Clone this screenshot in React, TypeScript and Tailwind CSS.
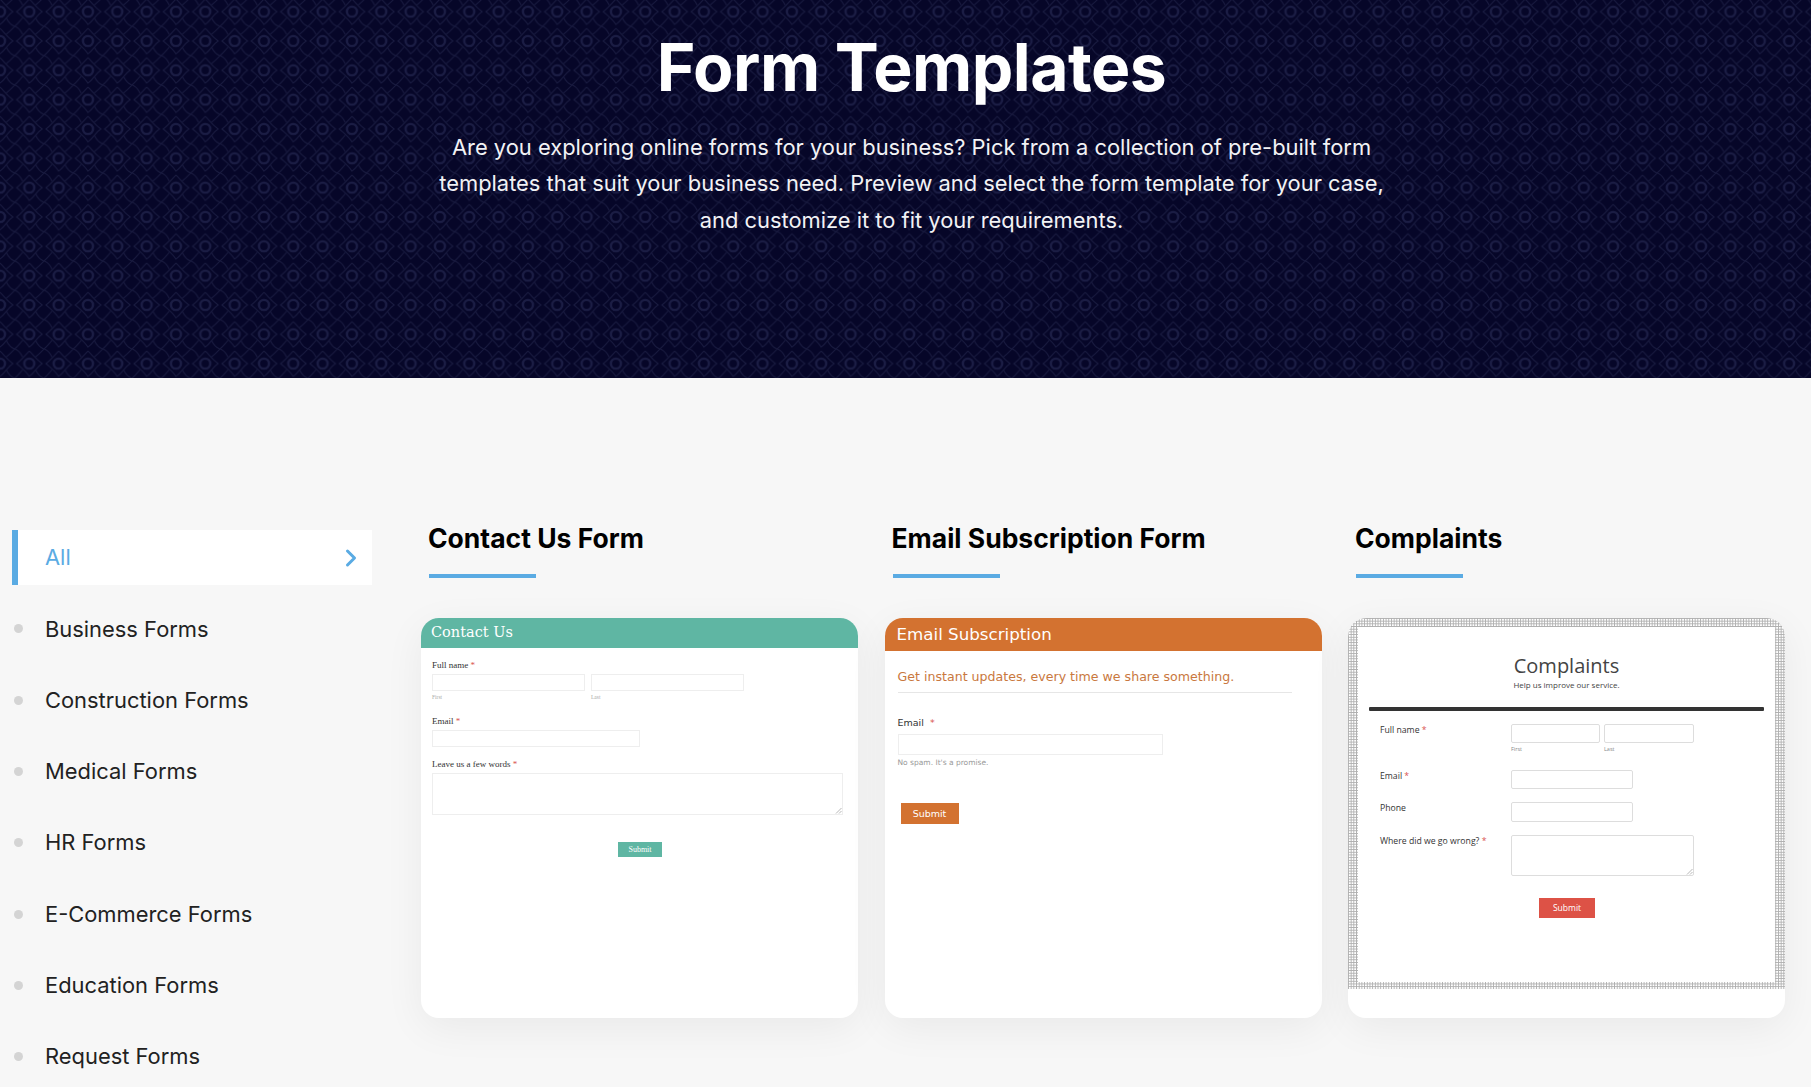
import React from "react";
import { ChevronRight } from "lucide-react";

const cats = ["Business Forms","Construction Forms","Medical Forms","HR Forms","E-Commerce Forms","Education Forms","Request Forms"];
const Star = () => <span className="text-[#d9534f]"> *</span>;

function Grip() {
  return (
    <svg className="absolute right-0 bottom-0" width="7" height="7" viewBox="0 0 7 7" aria-hidden="true">
      <path d="M1 6.5 L6.5 1 M4 6.5 L6.5 4" stroke="#999" strokeWidth="0.7" fill="none" />
    </svg>
  );
}

function Pattern() {
  return (
    <svg className="absolute inset-0 w-full h-full" aria-hidden="true">
      <defs>
        <pattern id="tile" x="14.66" y="-3" width="29.33" height="29.33" patternUnits="userSpaceOnUse">
          <circle cx="14.66" cy="14.66" r="5" fill="none" stroke="#1b1d44" strokeWidth="2.4" />
          <path d="M14.66 2 C19 6 20 9 27.5 14.66 C22 18 20 24 14.66 27.5 C11 22 8 20 2 14.66 C7 11 10 7 14.66 2" fill="none" stroke="#191b40" strokeWidth="1" />
          <path d="M0 0 C4 1 6 4 8 8 M29.33 29.33 C25 28 23 25 21 21 M29.33 0 C26 4 24 5 21 8 M0 29.33 C4 26 5 24 8 21" fill="none" stroke="#191b40" strokeWidth="1" />
        </pattern>
      </defs>
      <rect width="100%" height="100%" fill="url(#tile)" />
    </svg>
  );
}

function Header() {
  return (
    <section className="relative h-[378px] bg-[#060628] overflow-hidden text-white text-center pl-[12px]">
      <Pattern />
      <div className="relative flex flex-col items-center">
        <h1 className="mt-[27px] text-[66px] leading-[80px] font-bold tracking-[-0.5px]">Form Templates</h1>
        <p className="mt-[22px] w-[1000px] text-[21.9px] leading-[36.4px] text-[#f2f2f5]">
          Are you exploring online forms for your business? Pick from a collection of pre-built form<br />
          templates that suit your business need. Preview and select the form template for your case,<br />
          and customize it to fit your requirements.
        </p>
      </div>
    </section>
  );
}

function Sidebar() {
  return (
    <aside className="w-[360px] shrink-0 mt-[12px]">
      <div className="flex items-center justify-between h-[55px] bg-white border-l-[6px] border-[#5aabe3] pl-[27px] pr-[7.5px]">
        <span className="text-[21.9px] text-[#5aabe3]">All</span>
        <ChevronRight className="text-[#5aabe3]" size={28} strokeWidth={2.6} />
      </div>
      <ul className="mt-[8.35px]">
        {cats.map((c) => (
          <li key={c} className="flex items-center h-[71.3px] pl-[2px] text-[21.9px] text-[#222]">
            <span className="w-[9px] h-[9px] rounded-full bg-[#d4d4d4] mr-[22px]" />
            {c}
          </li>
        ))}
      </ul>
    </aside>
  );
}

function Title({ children }: { children: string }) {
  return (
    <div className="h-[100px]">
      <h2 className="ml-[7px] text-[26.5px] leading-[40px] font-bold text-black">{children}</h2>
      <div className="ml-[8px] mt-[16px] w-[107px] h-[4px] bg-[#5aabe3]" />
    </div>
  );
}

const cardCls = "h-[400px] bg-white rounded-[18px] shadow-[0_10px_40px_rgba(0,0,0,0.06)] overflow-hidden";

function ContactCard() {
  const lab = "text-[9px] leading-[11px] text-[#333]";
  const inp = "h-[17px] border border-[#eee] bg-white";
  const small = "text-[5.5px] leading-[12px] text-[#aaa]";
  return (
    <div className={`${cardCls} font-['Liberation_Serif',serif]`}>
      <div className="h-[30px] bg-[#5fb6a3] text-white text-[14.5px] leading-[28px] pl-[10px] font-['DejaVu_Serif',serif]">Contact Us</div>
      <div className="pl-[11px] pt-[12px]">
        <div className={lab}>Full name<Star /></div>
        <div className="mt-[3px] flex gap-[6px]">
          <div className="w-[153px]"><div className={inp} /><div className={small}>First</div></div>
          <div className="w-[153px]"><div className={inp} /><div className={small}>Last</div></div>
        </div>
        <div className={`${lab} mt-[12.5px]`}>Email<Star /></div>
        <div className={`${inp} w-[208px] mt-[3.5px]`} />
        <div className={`${lab} mt-[12px]`}>Leave us a few words<Star /></div>
        <div className="relative w-[411px] h-[42px] mt-[3px] border border-[#eee]"><Grip /></div>
        <div className="w-[411px] pl-[5px] mt-[27px] flex justify-center">
          <div className="w-[44px] h-[15px] bg-[#5fb6a3] text-white text-[8px] leading-[15px] text-center">Submit</div>
        </div>
      </div>
    </div>
  );
}

function EmailCard() {
  return (
    <div className={`${cardCls} font-['DejaVu_Sans',sans-serif]`}>
      <div className="h-[33px] bg-[#d37230] text-white text-[16.7px] leading-[32px] pl-[12px]">Email Subscription</div>
      <div className="pl-[13px] pt-[17px]">
        <div className="text-[12.6px] leading-[18px] text-[#c9783e]">Get instant updates, every time we share something.</div>
        <div className="w-[394px] h-px mt-[6px] bg-[#e6e6e6]" />
        <div className="text-[9.5px] leading-[12px] text-[#333] mt-[24px]">Email&nbsp;<Star /></div>
        <div className="w-[265px] h-[21px] mt-[5px] border border-[#eee]" />
        <div className="text-[7.5px] leading-[12px] text-[#999] mt-[2px]">No spam. It&apos;s a promise.</div>
        <div className="ml-[3px] mt-[34px] w-[58px] h-[21px] bg-[#d37230] text-white text-[9.5px] leading-[21px] text-center">Submit</div>
      </div>
    </div>
  );
}

function ComplaintsCard() {
  const lab = "w-[142px] pl-[11px] text-[8.7px] leading-[12px] text-[#333]";
  const inp = "h-[19.4px] border border-[#ddd] rounded-[2px]";
  const small = "text-[5.5px] leading-[12px] text-[#888]";
  return (
    <div className={`${cardCls} font-['Open_Sans',sans-serif]`}>
      <div className="h-[371px] pt-[9px] px-[10px] rounded-t-[18px] bg-[linear-gradient(#b0b0b0_1px,transparent_1px),linear-gradient(90deg,#b0b0b0_1px,transparent_1px)] bg-[length:2.7px_2.7px]">
        <div className="h-[355px] bg-white px-[11px]">
          <div className="pt-[25.5px] text-center text-[20px] leading-[26px] text-[#444]">Complaints</div>
          <div className="text-center text-[8px] leading-[11px] text-[#444]">Help us improve our service.</div>
          <div className="mt-[17.5px] h-[4px] bg-[#333] rounded-[1px]" />
          <div className="mt-[13px] flex">
            <div className={lab}>Full name<Star /></div>
            <div className="flex gap-[4px]">
              <div className="w-[89px]"><div className={inp} /><div className={small}>First</div></div>
              <div className="w-[90px]"><div className={inp} /><div className={small}>Last</div></div>
            </div>
          </div>
          <div className="mt-[14.5px] flex">
            <div className={lab}>Email<Star /></div>
            <div className={`${inp} w-[122px]`} />
          </div>
          <div className="mt-[13px] flex">
            <div className={lab}>Phone</div>
            <div className={`${inp} w-[122px]`} />
          </div>
          <div className="mt-[13px] flex">
            <div className={lab}>Where did we go wrong?<Star /></div>
            <div className="relative w-[183px] h-[41px] border border-[#ddd] rounded-[2px]"><Grip /></div>
          </div>
          <div className="mt-[22px] ml-[170px] w-[56px] h-[20px] bg-[#dd5246] text-white text-[8.5px] leading-[20px] text-center">Submit</div>
        </div>
      </div>
    </div>
  );
}

export default function App() {
  return (
    <div className="h-[1087px] overflow-hidden bg-[#f7f7f7] font-['Inter',sans-serif]">
      <Header />
      <main className="flex pl-[12px] pt-[140px]">
        <Sidebar />
        <div className="ml-[49px] grid grid-cols-[437px_437px_437px] gap-x-[26.5px]">
          <div><Title>Contact Us Form</Title><ContactCard /></div>
          <div><Title>Email Subscription Form</Title><EmailCard /></div>
          <div><Title>Complaints</Title><ComplaintsCard /></div>
        </div>
      </main>
    </div>
  );
}
